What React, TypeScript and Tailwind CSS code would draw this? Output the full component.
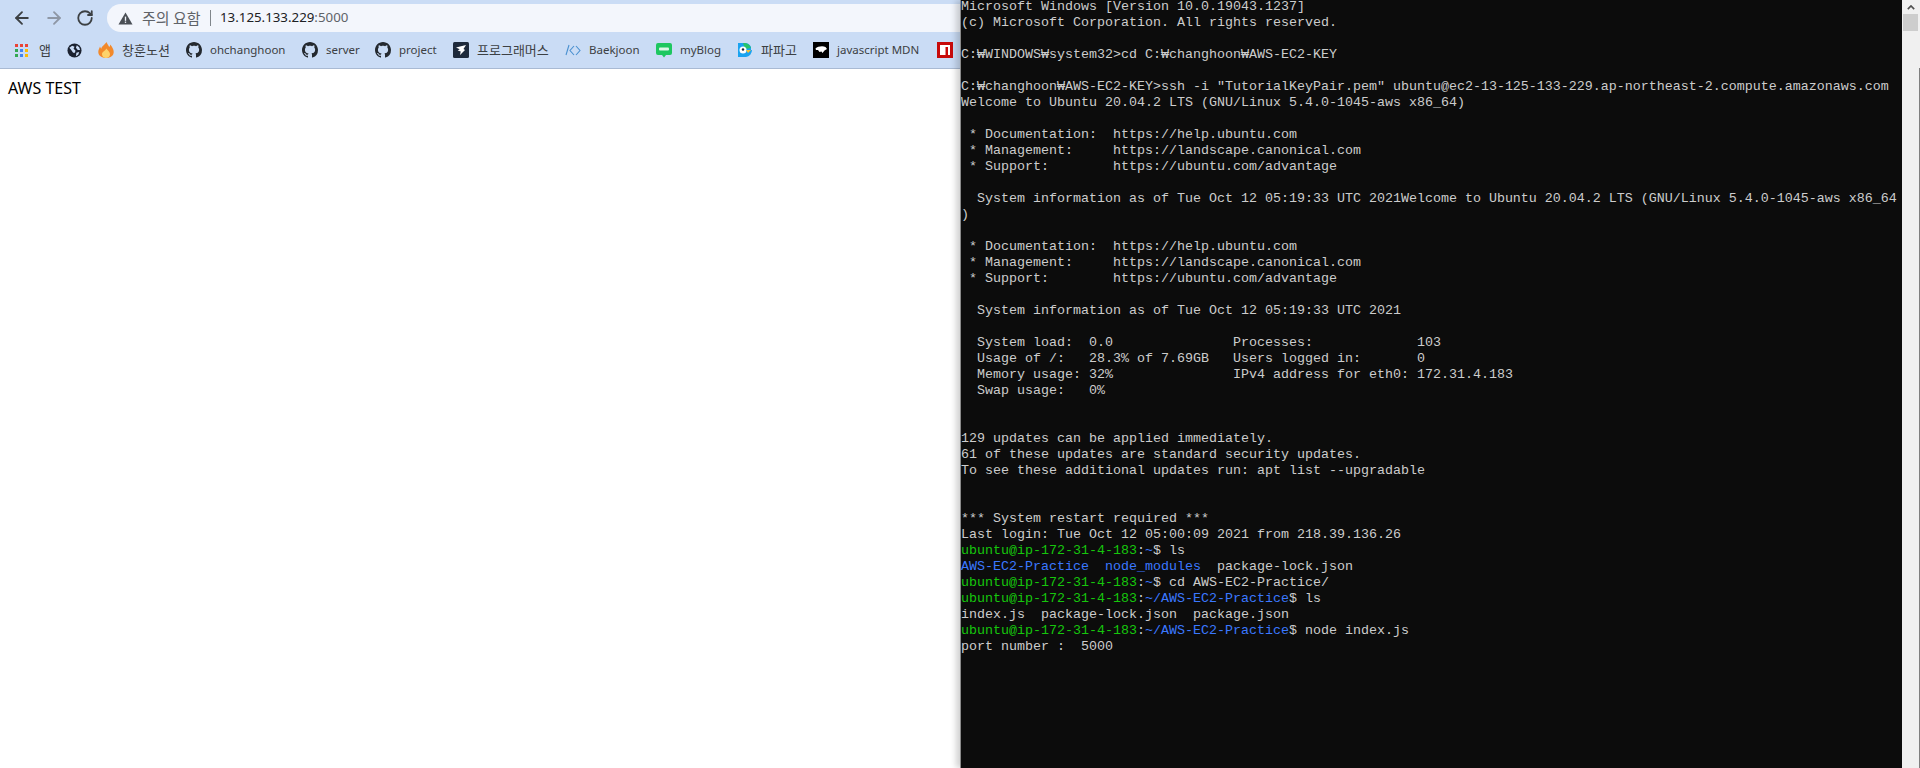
import React from 'react';
import { ArrowLeft, ArrowRight, RotateCw } from 'lucide-react';

const GitHubIcon = () => (
  <svg viewBox="0 0 16 16" className="w-4 h-4 shrink-0" fill="#24292f">
    <path d="M8 0C3.58 0 0 3.58 0 8c0 3.54 2.29 6.53 5.47 7.59.4.07.55-.17.55-.38 0-.19-.01-.82-.01-1.49-2.01.37-2.53-.49-2.69-.94-.09-.23-.48-.94-.82-1.13-.28-.15-.68-.52-.01-.53.63-.01 1.08.58 1.23.82.72 1.21 1.87.87 2.33.66.07-.52.28-.87.51-1.07-1.78-.2-3.64-.89-3.64-3.95 0-.87.31-1.59.82-2.15-.08-.2-.36-1.02.08-2.12 0 0 .67-.21 2.2.82.64-.18 1.32-.27 2-.27s1.36.09 2 .27c1.53-1.04 2.2-.82 2.2-.82.44 1.1.16 1.92.08 2.12.51.56.82 1.27.82 2.15 0 3.07-1.87 3.75-3.65 3.95.29.25.54.73.54 1.48 0 1.07-.01 1.93-.01 2.2 0 .21.15.46.55.38A8.01 8.01 0 0 0 16 8c0-4.42-3.58-8-8-8z" />
  </svg>
);

const AppsIcon = () => (
  <svg viewBox="0 0 13 13" className="w-[13px] h-[13px] shrink-0">
    <rect x="0" y="0" width="3" height="3" fill="#ea4335" />
    <rect x="5" y="0" width="3" height="3" fill="#ea4335" />
    <rect x="10" y="0" width="3" height="3" fill="#ea4335" />
    <rect x="0" y="5" width="3" height="3" fill="#34a853" />
    <rect x="5" y="5" width="3" height="3" fill="#4285f4" />
    <rect x="10" y="5" width="3" height="3" fill="#fbbc04" />
    <rect x="0" y="10" width="3" height="3" fill="#34a853" />
    <rect x="5" y="10" width="3" height="3" fill="#4285f4" />
    <rect x="10" y="10" width="3" height="3" fill="#fbbc04" />
  </svg>
);

const GlobeIcon = () => (
  <svg viewBox="0 0 16 16" className="w-[15px] h-[15px] shrink-0">
    <circle cx="8" cy="8" r="7.5" fill="#1b2230" />
    <path d="M2.5 5l3-2 2.5 1-1 2 2 2-.5 2.5-2 0-2-3zM10.5 2.5l2.5 2 1 3-2.5 0-2-2.5zM10 10.5l3-1-1 3-2.5 1.500z" fill="#cadcf5" />
  </svg>
);

const FireIcon = () => (
  <svg viewBox="0 0 16 16" className="w-4 h-4 shrink-0">
    <path d="M8.5 0c.5 2 2 3 2.7 5 .7-.6 1-1.5 1-2.5 2 2.5 3.5 4.8 3.5 7.5 0 3.5-3 6-7.5 6S.3 13.5.3 10c0-2.3 1-3.5 1.7-5.5.3 1 .7 1.7 1.3 2.2C3.600 4 6.800 2.800 8.500 0z" fill="#f2892b" />
    <path d="M8.500 6.500c.7 1.700 3.500 3 3.500 5.700 0 2.300-1.700 3.800-4 3.800s-4-1.500-4-3.800c0-2.500 3.300-3.200 4.500-5.700z" fill="#fdd36b" />
  </svg>
);

const ProgrammersIcon = () => (
  <svg viewBox="0 0 16 16" className="w-4 h-4 shrink-0">
    <rect width="16" height="16" rx="1.5" fill="#1e2a3c" />
    <path d="M3 5.500l10-2.500-2.500 4 1.500 1-5 5 .7-3.500-3-1 2-1.200z" fill="#fff" />
  </svg>
);

const BaekjoonIcon = () => (
  <svg viewBox="0 0 16 16" className="w-4 h-4 shrink-0" fill="none" stroke="#4a90d0" strokeWidth="1.1">
    <path d="M4 3L1 13" />
    <path d="M9 4L5 8.500l4 4.500" />
    <path d="M11 4l4 4.500-4 4.500" />
  </svg>
);

const BlogIcon = () => (
  <svg viewBox="0 0 16 16" className="w-4 h-4 shrink-0">
    <path d="M2 1h12a2 2 0 0 1 2 2v8a2 2 0 0 1-2 2h-4l-2 2.500L6 13H2a2 2 0 0 1-2-2V3a2 2 0 0 1 2-2z" fill="#1ec760" />
    <rect x="3" y="5.500" width="10" height="3" rx="1" fill="#fff" opacity="0.85" />
  </svg>
);

const PapagoIcon = () => (
  <svg viewBox="0 0 16 16" className="w-4 h-4 shrink-0">
    <path d="M1 1h7a7 7 0 0 1 6 4v3h1a7 7 0 0 1-6 7H1z" fill="#1aa3f0" />
    <path d="M6 1a7 7 0 0 1 8 5l-6 1z" fill="#27c46b" />
    <circle cx="6" cy="8" r="3.5" fill="#fff" />
    <circle cx="6" cy="7.5" r="1.2" fill="#1f2937" />
    <path d="M9 8h5l-3 3z" fill="#fbc02d" />
  </svg>
);

const MdnIcon = () => (
  <svg viewBox="0 0 16 16" className="w-4 h-4 shrink-0">
    <rect width="16" height="16" fill="#000" />
    <path d="M2.500 6.500c2-2 7-3 10-1.500l1.500 2-2.500 1.500-2 2.500-1-1.500-2 .5-1.500-2-2 0z" fill="#fff" />
  </svg>
);

const RedIcon = () => (
  <svg viewBox="0 0 16 16" className="w-4 h-4 shrink-0">
    <rect width="16" height="16" fill="#c80a0a" />
    <path d="M3 3h10v10h-2V5H8.500v8H3z" fill="#fff" />
  </svg>
);

type Bookmark = { icon: React.ReactNode; label?: string; cls?: string; mr: string };

const KO = "text-[13px] font-['Noto_Sans_CJK_KR',sans-serif]";

const BOOKMARKS: Bookmark[] = [
  { icon: <GlobeIcon />, mr: 'mr-[16px]' },
  { icon: <FireIcon />, label: '창훈노션', cls: `w-[47px] ${KO}`, mr: 'mr-[17px]' },
  { icon: <GitHubIcon />, label: 'ohchanghoon', cls: 'w-[75px]', mr: 'mr-[17px]' },
  { icon: <GitHubIcon />, label: 'server', cls: 'w-[32px]', mr: 'mr-[17px]' },
  { icon: <GitHubIcon />, label: 'project', cls: 'w-[38px]', mr: 'mr-[16px]' },
  { icon: <ProgrammersIcon />, label: '프로그래머스', cls: `w-[72px] ${KO}`, mr: 'mr-[16px]' },
  { icon: <BaekjoonIcon />, label: 'Baekjoon', cls: 'w-[49px]', mr: 'mr-[18px]' },
  { icon: <BlogIcon />, label: 'myBlog', cls: 'w-[40px]', mr: 'mr-[17px]' },
  { icon: <PapagoIcon />, label: '파파고', cls: `w-[36px] ${KO}`, mr: 'mr-[16px]' },
  { icon: <MdnIcon />, label: 'javascript MDN', cls: 'w-[83px]', mr: 'mr-[17px]' },
  { icon: <RedIcon />, mr: 'mr-0' },
];

type Seg = { t: string; c?: 'g' | 'b' };
const G = (t: string): Seg => ({ t, c: 'g' });
const B = (t: string): Seg => ({ t, c: 'b' });
const W = (t: string): Seg => ({ t });

const PROMPT = 'ubuntu@ip-172-31-4-183';

const LINES: Seg[][] = [
  [W('Microsoft Windows [Version 10.0.19043.1237]')],
  [W('(c) Microsoft Corporation. All rights reserved.')],
  [],
  [W('C:₩WINDOWS₩system32>cd C:₩changhoon₩AWS-EC2-KEY')],
  [],
  [W('C:₩changhoon₩AWS-EC2-KEY>ssh -i "TutorialKeyPair.pem" ubuntu@ec2-13-125-133-229.ap-northeast-2.compute.amazonaws.com')],
  [W('Welcome to Ubuntu 20.04.2 LTS (GNU/Linux 5.4.0-1045-aws x86_64)')],
  [],
  [W(' * Documentation:  https://help.ubuntu.com')],
  [W(' * Management:     https://landscape.canonical.com')],
  [W(' * Support:        https://ubuntu.com/advantage')],
  [],
  [W('  System information as of Tue Oct 12 05:19:33 UTC 2021Welcome to Ubuntu 20.04.2 LTS (GNU/Linux 5.4.0-1045-aws x86_64')],
  [W(')')],
  [],
  [W(' * Documentation:  https://help.ubuntu.com')],
  [W(' * Management:     https://landscape.canonical.com')],
  [W(' * Support:        https://ubuntu.com/advantage')],
  [],
  [W('  System information as of Tue Oct 12 05:19:33 UTC 2021')],
  [],
  [W('  System load:  0.0               Processes:             103')],
  [W('  Usage of /:   28.3% of 7.69GB   Users logged in:       0')],
  [W('  Memory usage: 32%               IPv4 address for eth0: 172.31.4.183')],
  [W('  Swap usage:   0%')],
  [],
  [],
  [W('129 updates can be applied immediately.')],
  [W('61 of these updates are standard security updates.')],
  [W('To see these additional updates run: apt list --upgradable')],
  [],
  [],
  [W('*** System restart required ***')],
  [W('Last login: Tue Oct 12 05:00:09 2021 from 218.39.136.26')],
  [G(PROMPT), W(':'), B('~'), W('$ ls')],
  [B('AWS-EC2-Practice'), W('  '), B('node_modules'), W('  package-lock.json')],
  [G(PROMPT), W(':'), B('~'), W('$ cd AWS-EC2-Practice/')],
  [G(PROMPT), W(':'), B('~/AWS-EC2-Practice'), W('$ ls')],
  [W('index.js  package-lock.json  package.json')],
  [G(PROMPT), W(':'), B('~/AWS-EC2-Practice'), W('$ node index.js')],
  [W('port number :  5000')],
];

const segColor = (c?: 'g' | 'b') => {
  if (c === 'g') return 'text-[#16c60c]';
  if (c === 'b') return 'text-[#3b78ff]';
  return 'text-[#cccccc]';
};

export default function App() {
  return (
    <div className="flex h-[768px] w-[1920px] overflow-hidden bg-white">
      {/* Browser */}
      <div className="w-[960px] shrink-0 flex flex-col font-['Noto_Sans','Noto_Sans_CJK_KR',sans-serif]">
        <div className="h-[32px] shrink-0 bg-[#cadcf5] flex items-center pt-[4px]">
          <div className="flex items-center gap-[12px] pl-[12px] pr-[13px]">
            <ArrowLeft size={20} strokeWidth={2.2} className="text-[#3c4043]" />
            <ArrowRight size={20} strokeWidth={2.2} className="text-[#8e97a5]" />
            <RotateCw size={18} strokeWidth={2.4} className="text-[#3c4043]" />
          </div>
          <div className="flex-1 h-[28px] bg-[#f3f6fc] rounded-l-full flex items-center pl-[11px] text-[13.3px]">
            <svg viewBox="0 0 16 16" className="w-[15px] h-[15px] shrink-0" fill="#4a4f55">
              <path d="M8 1.500L15.500 14.500H.5z" />
              <rect x="7.300" y="6" width="1.400" height="4.500" fill="#f3f6fc" />
              <rect x="7.300" y="11.300" width="1.400" height="1.400" fill="#f3f6fc" />
            </svg>
            <span className="ml-[9px] w-[60px] text-[15px] text-[#5f6368] whitespace-nowrap font-['Noto_Sans_CJK_KR',sans-serif]">주의 요함</span>
            <span className="ml-[8px] w-px h-[16px] bg-[#80868b]" />
            <span className="ml-[9px] text-[#202124]">
              13.125.133.229<span className="text-[#5f6368]">:5000</span>
            </span>
          </div>
        </div>
        <div className="h-[37px] shrink-0 bg-[#cadcf5] border-b border-[#a9bad3] flex items-center pl-[15px] text-[11.5px] text-[#3c4043] whitespace-nowrap overflow-hidden">
          <AppsIcon />
          <span className={`ml-[11px] w-[11px] mr-[17px] ${KO}`}>앱</span>
          {BOOKMARKS.map((b, i) => (
            <div key={i} className={`flex items-center gap-[8px] ${b.mr}`}>
              {b.icon}
              {b.label && <span className={b.cls}>{b.label}</span>}
            </div>
          ))}
        </div>
        <div className="flex-1 bg-white pl-[8px] pt-[7px] text-[16px] text-black leading-[24px]">AWS TEST</div>
      </div>

      {/* Terminal */}
      <div className="relative flex-1 flex bg-[#0c0c0c] border-l border-[#8a8a8a] min-w-0 shadow-[-4px_0_6px_rgba(0,0,0,0.18)]">
        <div className="flex-1 min-w-0 -mt-[1px] font-['Liberation_Mono','Noto_Sans_CJK_KR',monospace] text-[13.333px] leading-[16px] whitespace-pre overflow-hidden">
          {LINES.map((line, i) => (
            <div key={i} className="h-[16px]">
              {line.map((s, j) => (
                <span key={j} className={segColor(s.c)}>{s.t}</span>
              ))}
            </div>
          ))}
        </div>
        <div className="w-[17px] shrink-0 bg-[#f0f0f0] flex flex-col items-center">
          <div className="h-[14px] flex items-center justify-center">
            <svg viewBox="0 0 10 6" className="w-[8px] h-[5px]" fill="none" stroke="#505050" strokeWidth="2">
              <path d="M1 5l4-4 4 4" />
            </svg>
          </div>
          <div className="w-[15px] h-[17px] bg-[#cdcdcd]" />
        </div>
        <div className="w-px shrink-0 flex flex-col">
          <div className="h-[68px] bg-[#f0f0f0]" />
          <div className="flex-1 bg-[#7f7f7f]" />
        </div>
      </div>
    </div>
  );
}
